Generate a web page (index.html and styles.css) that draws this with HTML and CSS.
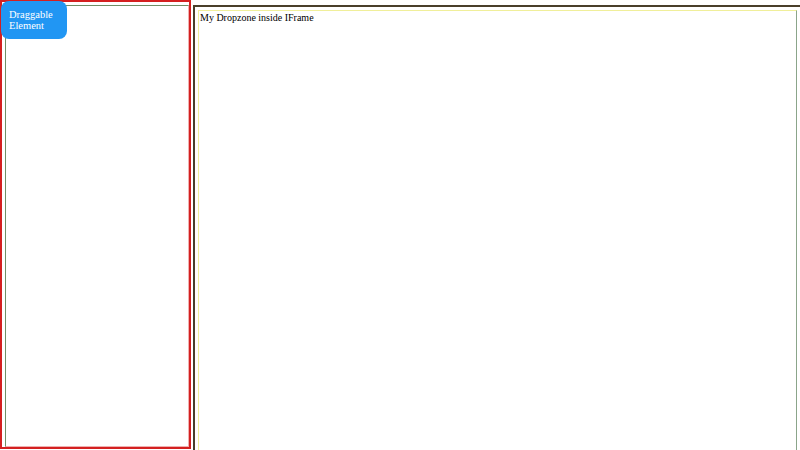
FILE: index.html
```html
<!DOCTYPE html>
<html>
<head>
<meta charset="utf-8">
<link rel="stylesheet" href="styles.css">
</head>
<body>
<div class="page">
  <div class="source">
    <div class="source-inner"></div>
    <div class="draggable">Draggable<br>Element</div>
  </div>
  <div class="frame">
    <div class="frame-body">
      <div class="dropzone">My Dropzone inside IFrame</div>
    </div>
  </div>
</div>
</body>
</html>
```
FILE: styles.css
```css
html, body {
  margin: 0;
  padding: 0;
  background: #fff;
  font-family: "Liberation Serif", "Times New Roman", serif;
  overflow: hidden;
}
.page {
  display: flex;
  gap: 2px;
  height: 450px;
  width: 800px;
}
.source {
  position: relative;
  box-sizing: border-box;
  width: 191px;
  height: 449px;
  border: 2px solid #d42020;
  padding: 3px 0 0 3px;
}
.source-inner {
  box-sizing: border-box;
  height: 100%;
  border: 1px solid #6f8f66;
  border-right-color: #f0b0b0;
  border-bottom-color: #f0b0b0;
}
.draggable {
  position: absolute;
  left: -1px;
  top: -1px;
  box-sizing: border-box;
  width: 66px;
  height: 38px;
  padding: 8px 0 0 8px;
  background: #2196f3;
  color: #fff;
  border-radius: 8px;
  font-size: 10.5px;
  line-height: 11px;
}
.frame {
  flex: 1;
  margin-top: 5px;
  box-sizing: border-box;
  border-top: 2px solid #4a3f2a;
  border-left: 2px solid #4a3f2a;
  padding: 3px 3px 0 3px;
}
.frame-body {
  box-sizing: border-box;
  height: 100%;
  border: 1px solid #f0ef9a;
  border-right: 1px solid #8ba58a;
  border-bottom: none;
  padding: 1px 0 0 1px;
}
.dropzone {
  font-size: 10px;
  line-height: 12px;
  color: #000;
}
```
